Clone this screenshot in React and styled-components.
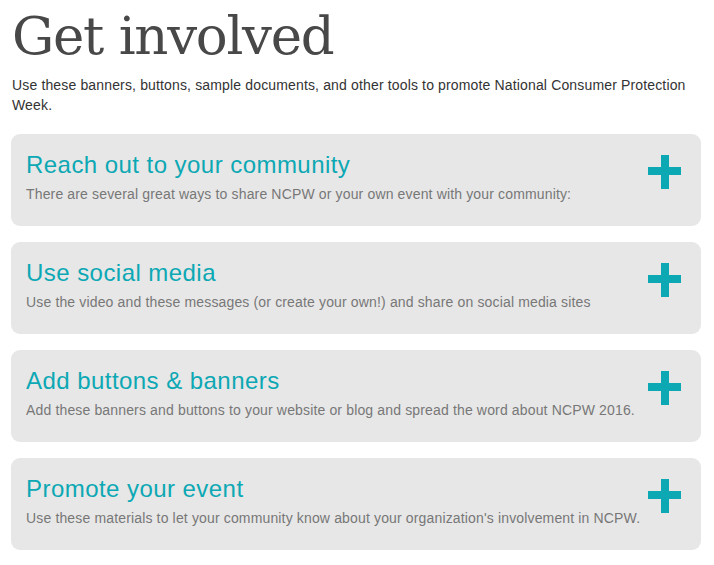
import React from 'react';
import styled, { createGlobalStyle } from 'styled-components';

const GlobalStyle = createGlobalStyle`
  body {
    margin: 0;
    background: #fff;
    font-family: 'Liberation Sans', Arial, sans-serif;
  }
`;

const Page = styled.div`
  padding: 4px 13px 0 11px;
`;

const Title = styled.h1`
  font-family: 'DejaVu Serif', serif;
  font-weight: normal;
  font-size: 53px;
  line-height: 64px;
  color: #484848;
  margin: 0 0 0 1px;
  letter-spacing: -1.3px;
`;

const Intro = styled.p`
  font-size: 14px;
  line-height: 20px;
  color: #333;
  letter-spacing: 0.15px;
  margin: 7px 0 19px 1px;
`;

const CardList = styled.div`
  display: flex;
  flex-direction: column;
  gap: 16px;
`;

const Card = styled.div`
  display: flex;
  align-items: flex-start;
  justify-content: space-between;
  background: #e7e7e7;
  border-radius: 9px;
  height: 92px;
  box-sizing: border-box;
  padding: 17px 20px 0 15px;
`;

const CardText = styled.div`
  display: flex;
  flex-direction: column;
`;

const CardTitle = styled.h2`
  font-size: 24px;
  font-weight: normal;
  line-height: 28px;
  letter-spacing: 0.45px;
  color: #0ca8b4;
  margin: 0;
`;

const CardDesc = styled.p`
  font-size: 14px;
  line-height: 20px;
  letter-spacing: 0.15px;
  color: #777;
  margin: 5px 0 0;
`;

const Plus = styled.svg`
  flex-shrink: 0;
  margin-top: 4px;
`;

const items = [
  {
    title: 'Reach out to your community',
    desc: 'There are several great ways to share NCPW or your own event with your community:',
  },
  {
    title: 'Use social media',
    desc: 'Use the video and these messages (or create your own!) and share on social media sites',
  },
  {
    title: 'Add buttons & banners',
    desc: 'Add these banners and buttons to your website or blog and spread the word about NCPW 2016.',
  },
  {
    title: 'Promote your event',
    desc: "Use these materials to let your community know about your organization's involvement in NCPW.",
  },
];

function PlusIcon() {
  return (
    <Plus width="33" height="34" viewBox="0 0 33 34">
      <rect x="13" y="0" width="8" height="34" fill="#0ca8b4" />
      <rect x="0" y="12" width="33" height="8" fill="#0ca8b4" />
    </Plus>
  );
}

export default function App() {
  return (
    <Page>
      <GlobalStyle />
      <Title>Get involved</Title>
      <Intro>
        Use these banners, buttons, sample documents, and other tools to promote National Consumer Protection Week.
      </Intro>
      <CardList>
        {items.map((item) => (
          <Card key={item.title}>
            <CardText>
              <CardTitle>{item.title}</CardTitle>
              <CardDesc>{item.desc}</CardDesc>
            </CardText>
            <PlusIcon />
          </Card>
        ))}
      </CardList>
    </Page>
  );
}
